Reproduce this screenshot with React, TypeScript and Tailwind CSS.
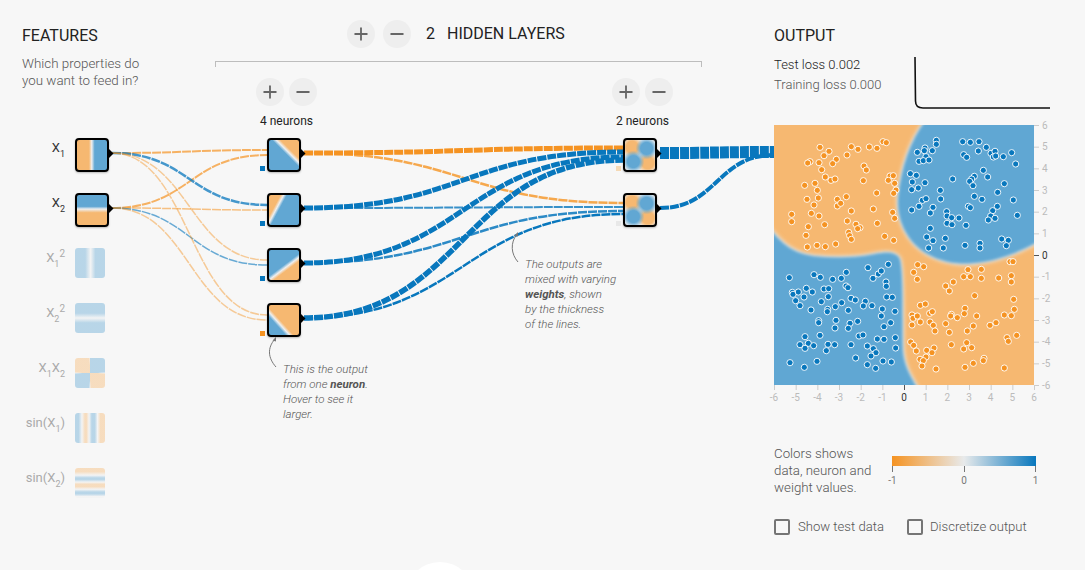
import { Minus, Plus } from "lucide-react";

const ORANGE = "#f59322";
const BLUE = "#0877bd";

// source -> target links of the network, dashed like the animated original
const LINKS: Array<[number, number, number, number, string, number, number]> = [
  [112, 153, 267, 150, ORANGE, 2, 0.7],
  [112, 208, 267, 155, ORANGE, 2, 0.7],
  [112, 153, 267, 205, BLUE, 2.5, 0.75],
  [112, 208, 267, 210, ORANGE, 1.5, 0.55],
  [112, 153, 267, 260, ORANGE, 1.5, 0.45],
  [112, 208, 267, 265, BLUE, 1.5, 0.6],
  [112, 153, 267, 315, ORANGE, 1.5, 0.45],
  [112, 208, 267, 320, ORANGE, 1.5, 0.45],
  [304, 153, 623, 203, ORANGE, 2.5, 0.8],
  [304, 153, 623, 148, ORANGE, 5, 1],
  [304, 208, 623, 152, BLUE, 5, 1],
  [304, 208, 623, 207, BLUE, 2, 0.8],
  [304, 263, 623, 157, BLUE, 5, 1],
  [304, 263, 623, 211, BLUE, 2.5, 0.85],
  [304, 318, 623, 160, BLUE, 5.5, 1],
  [304, 318, 623, 214, BLUE, 2.5, 1],
  [660, 153, 774, 152, BLUE, 12, 1],
  [660, 208, 774, 155, BLUE, 4, 1],
];

// scatter points read off the plot
const ORANGE_TOP = [[180,412],[207,424],[192,437],[229,448],[150,455],[143,459],[177,458],[218,461],[185,479],[196,501],[213,511],[225,507],[134,526],[165,520],[172,541],[141,568],[175,564],[232,568],[259,560],[162,585],[232,588],[242,580],[95,613],[95,635],[154,610],[177,618],[145,650],[194,644],[138,676],[171,706],[142,711],[196,710],[227,702],[274,410],[294,418],[261,435],[328,411],[351,415],[369,395],[379,398],[312,468],[319,480],[310,512],[390,498],[400,497],[385,511],[404,520],[350,549],[408,540],[401,550],[274,603],[340,597],[398,607],[404,625],[262,633],[288,643],[300,653],[293,656],[352,640],[266,667],[269,677],[274,688],[374,679],[401,691]];
const BLUE_TOP = [[529,391],[529,403],[495,414],[472,427],[493,422],[517,422],[498,440],[477,454],[490,452],[507,450],[608,395],[631,397],[657,395],[679,412],[655,423],[611,434],[620,442],[693,430],[705,424],[700,441],[707,438],[730,440],[755,428],[767,462],[670,481],[683,501],[643,499],[635,507],[629,514],[639,527],[578,507],[451,491],[469,496],[457,516],[495,518],[455,539],[475,534],[541,541],[542,567],[487,571],[498,566],[477,589],[519,592],[455,600],[511,609],[643,559],[666,568],[713,547],[733,521],[760,570],[772,616],[712,589],[698,602],[625,589],[631,593],[560,605],[561,618],[575,623],[597,624],[561,640],[576,644],[618,646],[692,618],[685,630],[705,625],[511,655],[500,681],[519,692],[556,685],[506,714],[550,714],[615,706],[660,700],[660,714],[725,687],[745,691],[739,707]];
const BLUE_BOTTOM = [[88,83],[162,74],[181,82],[218,88],[244,85],[259,67],[324,53],[355,72],[364,63],[339,85],[385,43],[378,96],[379,109],[258,108],[264,113],[192,117],[206,116],[139,115],[97,127],[99,133],[115,126],[157,126],[132,141],[107,152],[120,167],[205,140],[184,155],[245,158],[226,170],[273,145],[286,150],[316,154],[310,168],[336,167],[380,141],[397,142],[153,180],[203,178],[202,185],[265,181],[367,177],[364,198],[405,184],[228,211],[176,212],[176,218],[270,220],[293,214],[392,218],[225,234],[265,235],[372,230],[135,260],[180,256],[297,258],[309,255],[352,267],[372,268],[406,263],[120,284],[145,280],[161,287],[135,295],[204,283],[224,284],[273,284],[199,302],[322,288],[340,296],[348,308],[333,318],[407,294],[287,324],[171,334],[90,338],[133,352],[322,344],[347,355],[369,333],[394,336]];
const ORANGE_BOTTOM = [[473,44],[491,50],[461,67],[472,88],[750,35],[759,35],[624,59],[664,58],[611,80],[631,80],[664,85],[716,84],[754,77],[754,96],[580,96],[557,108],[568,123],[644,137],[761,148],[763,178],[481,166],[496,162],[615,175],[509,190],[517,185],[574,193],[572,198],[613,191],[592,203],[650,198],[733,195],[754,197],[456,195],[459,205],[472,198],[481,216],[456,225],[510,216],[520,226],[557,221],[708,218],[690,226],[640,228],[568,247],[525,243],[622,243],[770,256],[741,263],[745,274],[452,276],[461,286],[469,303],[620,278],[574,284],[635,293],[611,297],[522,294],[500,301],[516,308],[498,321],[480,328],[490,332],[486,348],[528,357],[640,340],[615,352],[672,325],[670,332],[733,354]];

const TICKS = [-6, -5, -4, -3, -2, -1, 0, 1, 2, 3, 4, 5, 6];

function Links() {
  return (
    <svg className="pointer-events-none absolute top-0 left-0" width="1085" height="570" fill="none">
      {LINKS.map(([x0, y0, x1, y1, color, width, opacity], i) => {
        const mid = (x0 + x1) / 2;
        return (
          <path
            key={i}
            d={`M${x0} ${y0}C${mid} ${y0} ${mid} ${y1} ${x1} ${y1}`}
            stroke={color}
            strokeWidth={width}
            strokeOpacity={opacity}
            strokeDasharray="9 1"
          />
        );
      })}
      <g stroke="#777" strokeWidth="1">
        <path d="M276 367C268 358 267 348 275 339" />
        <path d="M518 262C511 254 510 243 517 234" />
      </g>
      <path d="M276 337l-3.5 3.5 3.5 1z" fill="#777" />
      <path d="M518 232l-3.5 3.5 3.5 1z" fill="#777" />
    </svg>
  );
}

function RoundButton({ minus = false }: { minus?: boolean }) {
  const Icon = minus ? Minus : Plus;
  return (
    <button className="flex h-[28px] w-[28px] items-center justify-center rounded-full bg-[#eeeeee] text-[#666]">
      <Icon size={20} strokeWidth={2.2} />
    </button>
  );
}

function Node({ bg, bias, children }: { bg?: string; bias?: string; children?: React.ReactNode }) {
  return (
    <div className="relative h-[34px] w-[34px] shrink-0">
      <div className={`h-full w-full overflow-hidden rounded-[4px] border-2 border-black shadow-[0_1px_2px_rgba(0,0,0,0.25)] ${bg ?? ""}`}>
        {children}
      </div>
      <svg className="absolute top-[11px] left-[34px]" width="5" height="9">
        <path d="M0 0l4.5 4.5L0 9z" fill="#000" />
      </svg>
      {bias && <div className={`absolute top-[28px] left-[-7px] h-[5px] w-[5px] ${bias}`} />}
    </div>
  );
}

function Sub({ children }: { children: React.ReactNode }) {
  return <sub className="bottom-[-5px] text-[9px]">{children}</sub>;
}

function Sup({ children }: { children: React.ReactNode }) {
  return <sup className="top-[-5px] text-[10px]">{children}</sup>;
}

function Label({ faded, children }: { faded?: boolean; children: React.ReactNode }) {
  return (
    <div className={`w-[65px] pt-[1px] text-right text-[13px] leading-[18px] whitespace-nowrap ${faded ? "text-[#aaa]" : "text-[#333]"}`}>
      {children}
    </div>
  );
}

function FadedInput({ label, bg }: { label: React.ReactNode; bg: string }) {
  return (
    <div className="flex h-[55px] gap-[10px]">
      <Label faded>{label}</Label>
      <div className={`h-[30px] w-[30px] rounded-[3px] opacity-[0.42] ${bg}`} />
    </div>
  );
}

function Features() {
  return (
    <div className="w-[215px] shrink-0 pt-[27px] pl-[22px]">
      <h4 className="text-[16px] leading-[18px] text-[#222]">FEATURES</h4>
      <p className="mt-[10px] text-[13.35px] leading-[17px] font-light text-[#555]">
        Which properties do
        <br />
        you want to feed in?
      </p>
      <div className="mt-[49px] ml-[-22px]">
        <div className="flex h-[55px] gap-[10px]">
          <Label>X<Sub>1</Sub></Label>
          <Node bg="bg-[linear-gradient(to_right,#f6b871_40%,#eeeff0_49%,#61a7d3_59%)]" />
        </div>
        <div className="flex h-[55px] gap-[10px]">
          <Label>X<Sub>2</Sub></Label>
          <Node bg="bg-[linear-gradient(to_bottom,#61a7d3_38%,#eeeff0_47%,#f6b871_59%)]" />
        </div>
        <FadedInput
          label={<>X<Sub>1</Sub><Sup>2</Sup></>}
          bg="bg-[linear-gradient(to_right,#61a7d3_34%,#eeeff0_52%,#61a7d3_68%)]"
        />
        <FadedInput
          label={<>X<Sub>2</Sub><Sup>2</Sup></>}
          bg="bg-[linear-gradient(to_bottom,#61a7d3_34%,#eeeff0_50%,#61a7d3_66%)]"
        />
        <FadedInput
          label={<>X<Sub>1</Sub>X<Sub>2</Sub></>}
          bg="bg-[conic-gradient(#61a7d3_24%,#eeeff0_25%,#f6b871_26%_49%,#eeeff0_50%,#61a7d3_51%_74%,#eeeff0_75%,#f6b871_76%_99%,#eeeff0)]"
        />
        <FadedInput
          label={<>sin(X<Sub>1</Sub>)</>}
          bg="bg-[linear-gradient(to_right,#61a7d3_12%,#eeeff0_23%,#f6b871_33%_38%,#eeeff0_47%,#61a7d3_56%_66%,#eeeff0_75%,#f6b871_85%)]"
        />
        <FadedInput
          label={<>sin(X<Sub>2</Sub>)</>}
          bg="bg-[linear-gradient(to_bottom,#f6b871_12%,#eeeff0_24%,#61a7d3_33%_38%,#eeeff0_47%,#f6b871_54%_62%,#eeeff0_71%,#61a7d3_80%_86%,#eeeff0_95%)]"
        />
      </div>
    </div>
  );
}

const QUAD =
  "bg-[radial-gradient(circle_at_72%_28%,#61a7d3_6px,transparent_11px),radial-gradient(circle_at_28%_72%,#61a7d3_6px,transparent_11px),radial-gradient(circle_at_24%_24%,#f6b871_6px,transparent_11px),radial-gradient(circle_at_76%_76%,#f6b871_6px,transparent_11px),linear-gradient(#eeeff0,#eeeff0)]";

function Network() {
  return (
    <div className="w-[487px] shrink-0 pt-[20px]">
      <div className="ml-[132px] flex items-center gap-[8px]">
        <RoundButton />
        <RoundButton minus />
        <span className="ml-[7px] text-[16px] text-[#222]">2</span>
        <span className="ml-[4px] text-[16px] text-[#222]">HIDDEN LAYERS</span>
      </div>
      <div className="mt-[13px] h-[6px] border-x border-t border-[#bdbdbd]" />
      <div className="mt-[11px] ml-[41px] flex gap-[295px]">
        <div className="w-[61px]">
          <div className="flex gap-[5px]">
            <RoundButton />
            <RoundButton minus />
          </div>
          <div className="mt-[8px] mb-[10px] text-center text-[12px] leading-[14px] whitespace-nowrap text-[#222]">4 neurons</div>
          <div className="ml-[11px] flex flex-col gap-[21px]">
            <Node bg="bg-[linear-gradient(45deg,#61a7d3_55%,#eeeff0_62%,#f6b871_69%)]" bias="bg-[#0877bd]" />
            <Node bg="bg-[linear-gradient(118deg,#f6b871_25%,#eeeff0_32%,#61a7d3_39%)]" bias="bg-[#0877bd]" />
            <Node bg="bg-[linear-gradient(143deg,#61a7d3_50%,#eeeff0_57%,#f6b871_64%)]" bias="bg-[#0877bd]" />
            <Node bg="bg-[linear-gradient(228deg,#f6b871_57%,#eeeff0_64%,#61a7d3_71%)]" bias="bg-[#f59322]" />
          </div>
          <p className="mt-[25px] ml-[27px] w-[100px] text-[11.5px] leading-[15px] font-light whitespace-nowrap text-[#555] italic">
            This is the output
            <br />
            from one <b className="font-bold">neuron</b>.
            <br />
            Hover to see it
            <br />
            larger.
          </p>
        </div>
        <div className="w-[61px]">
          <div className="flex gap-[5px]">
            <RoundButton />
            <RoundButton minus />
          </div>
          <div className="mt-[8px] mb-[10px] text-center text-[12px] leading-[14px] whitespace-nowrap text-[#222]">2 neurons</div>
          <div className="ml-[11px] flex flex-col gap-[21px]">
            <Node bg={QUAD} bias="bg-[#f5d9b5]" />
            <Node bg={QUAD} bias="bg-[#e8e8e8]" />
          </div>
        </div>
      </div>
    </div>
  );
}

function HeatMap() {
  return (
    <svg width="311" height="285" className="block overflow-visible">
      <defs>
        <clipPath id="plot">
          <rect width="260" height="260" />
        </clipPath>
        <filter id="soft" x="-10%" y="-10%" width="120%" height="120%">
          <feGaussianBlur stdDeviation="1.6" />
        </filter>
        <filter id="softer" x="-10%" y="-10%" width="120%" height="120%">
          <feGaussianBlur stdDeviation="2" />
        </filter>
      </defs>
      <g clipPath="url(#plot)">
        <rect width="260" height="260" fill="#f6b871" />
        <g fill="#eeeff0" stroke="#eeeff0" strokeWidth="2" filter="url(#softer)">
          <path d="M151 -4C136 16 127 42 124 72C122 96 134 118 153 129C170 139 190 140 203 138C224 136 244 128 266 116L266 -4Z" />
          <path d="M-4 104C8 118 18 128 40 131C60 133 80 133 100 129C112 127 122 126 126 134C130 150 128 200 129 225C130 240 136 250 144 264L-4 264Z" />
        </g>
        <g fill="#61a7d3" filter="url(#soft)">
          <path d="M151 -4C136 16 127 42 124 72C122 96 134 118 153 129C170 139 190 140 203 138C224 136 244 128 266 116L266 -4Z" />
          <path d="M-4 104C8 118 18 128 40 131C60 133 80 133 100 129C112 127 122 126 126 134C130 150 128 200 129 225C130 240 136 250 144 264L-4 264Z" />
        </g>
      </g>
      <g stroke="#fff" strokeOpacity="0.9" strokeWidth="1">
        {ORANGE_TOP.map(([x, y], i) => (
          <circle key={i} cx={x / 3 - 14} cy={y / 3 - 115} r="3.1" fill={ORANGE} />
        ))}
        {BLUE_TOP.map(([x, y], i) => (
          <circle key={i} cx={x / 3 - 14} cy={y / 3 - 115} r="3.1" fill={BLUE} />
        ))}
        {BLUE_BOTTOM.map(([x, y], i) => (
          <circle key={i} cx={x / 3 - 14} cy={y / 3 + 125} r="3.1" fill={BLUE} />
        ))}
        {ORANGE_BOTTOM.map(([x, y], i) => (
          <circle key={i} cx={x / 3 - 14} cy={y / 3 + 125} r="3.1" fill={ORANGE} />
        ))}
      </g>
      <g fontSize="10">
        {TICKS.map((t) => {
          const pos = ((t + 6) * 260) / 12;
          const zero = t === 0;
          return (
            <g key={t}>
              <line x1="260" x2="265" y1={260 - pos + 0.5} y2={260 - pos + 0.5} stroke={zero ? "#555" : "#ccc"} />
              <text x="268" y={260 - pos + 3.5} fill={zero ? "#333" : "#bbb"}>{t}</text>
              <line x1={pos + 0.5} x2={pos + 0.5} y1="260" y2="265" stroke={zero ? "#555" : "#ccc"} />
              <text x={pos} y="276" fill={zero ? "#333" : "#bbb"} textAnchor="middle">{t}</text>
            </g>
          );
        })}
      </g>
    </svg>
  );
}

function LegendTick({ label }: { label: string }) {
  return (
    <div className="flex w-px flex-col items-center">
      <div className="h-[6px] w-px bg-[#777]" />
      <span className="mt-[3px] text-[10px] leading-[12px] text-[#777]">{label}</span>
    </div>
  );
}

function Checkbox({ label, className }: { label: string; className: string }) {
  return (
    <label className={`flex items-center text-[13.1px] leading-[16px] font-light whitespace-nowrap text-[#555] ${className}`}>
      <span className="h-[16px] w-[16px] rounded-[2px] border-2 border-[#757575]" />
      {label}
    </label>
  );
}

function Output() {
  return (
    <div className="ml-[72px] w-[311px] shrink-0 pt-[27px]">
      <h4 className="text-[16px] leading-[18px] text-[#222]">OUTPUT</h4>
      <div className="mt-[10px] flex h-[70px] text-[13px] leading-[19.5px]">
        <div className="w-[139.5px] font-light">
          <div className="text-[#222]">Test loss 0.002</div>
          <div className="text-[#555]">Training loss 0.000</div>
        </div>
        <svg width="136" height="54" className="mt-[2px]" fill="none">
          <path d="M1 0L1.5 44C1.5 49 4 51 9 51L136 51" stroke="#111" strokeWidth="1.6" />
        </svg>
      </div>
      <HeatMap />
      <div className="mt-[35px] flex">
        <p className="w-[118px] text-[13.3px] leading-[17px] font-light text-[#555]">
          Colors shows
          <br />
          data, neuron and
          <br />
          weight values.
        </p>
        <div className="mt-[11px] w-[144px]">
          <div className="h-[10px] bg-[linear-gradient(to_right,#f59322,#e8eaeb_50%,#0877bd)]" />
          <div className="flex justify-between">
            <LegendTick label="-1" />
            <LegendTick label="0" />
            <LegendTick label="1" />
          </div>
        </div>
      </div>
      <div className="mt-[23px] flex">
        <Checkbox label="Show test data" className="w-[133px] gap-[8px]" />
        <Checkbox label="Discretize output" className="gap-[7px]" />
      </div>
    </div>
  );
}

export default function App() {
  return (
    <div className="relative flex h-[570px] w-[1085px] overflow-hidden bg-[#f7f7f7] font-[Roboto,sans-serif]">
      <Links />
      <div className="relative flex">
        <Features />
        <Network />
        <Output />
      </div>
      <p className="absolute top-[257px] left-[525px] text-[11.5px] leading-[15px] font-light whitespace-nowrap text-[#555] italic">
        The outputs are
        <br />
        mixed with varying
        <br />
        <b className="font-bold">weights</b>, shown
        <br />
        by the thickness
        <br />
        of the lines.
      </p>
      <div className="absolute top-[562px] left-[406px] h-[68px] w-[68px] rounded-full bg-white" />
    </div>
  );
}
